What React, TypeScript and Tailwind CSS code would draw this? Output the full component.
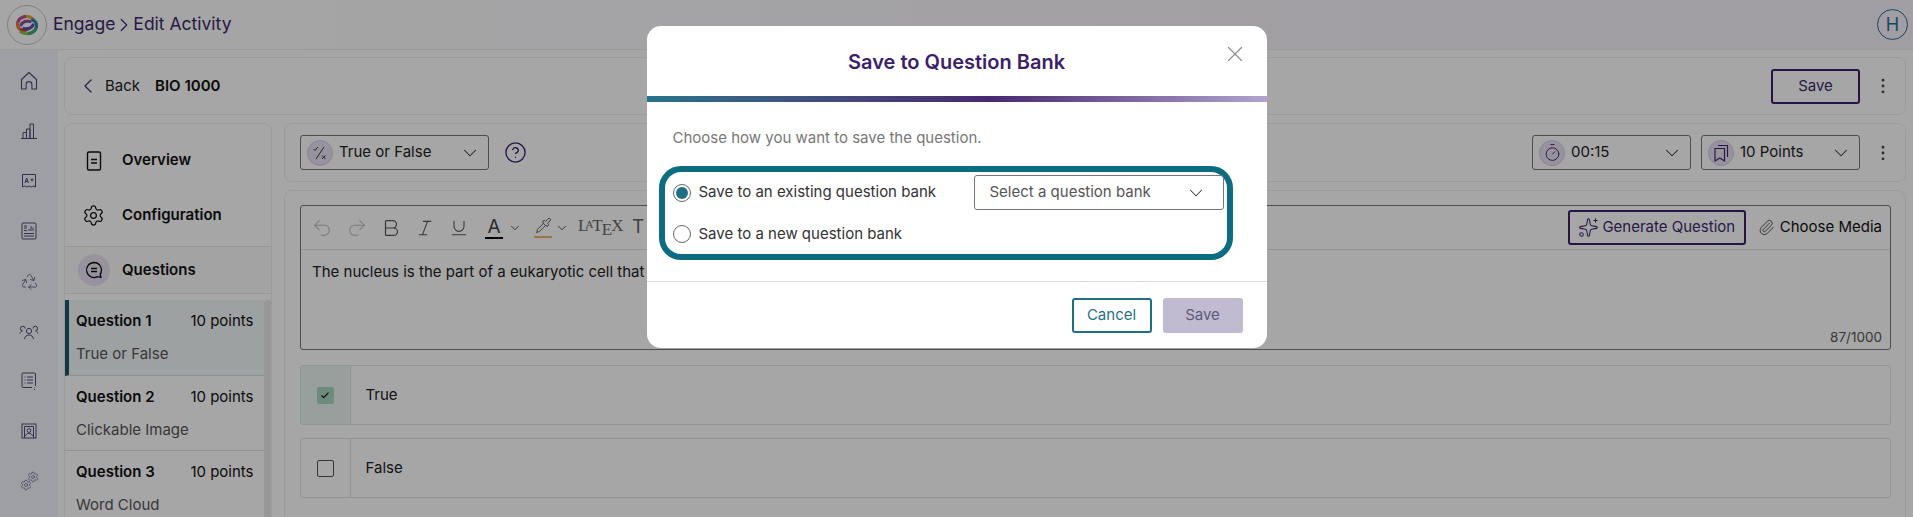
import {
  Bold,
  ChevronDown,
  ChevronLeft,
  ChevronRight,
  CircleHelp,
  EllipsisVertical,
  Italic,
  Paperclip,
  Pipette,
  Recycle,
  Redo2,
  Settings,
  Sparkles,
  Timer,
  Underline,
  Undo2,
  X,
} from "lucide-react";

const questions = [
  { name: "Question 1", type: "True or False", active: true },
  { name: "Question 2", type: "Clickable Image", active: false },
  { name: "Question 3", type: "Word Cloud", active: false },
];

function Logo() {
  return (
    <div className="w-10 h-10 rounded-full bg-white border border-[#c4c4c4] flex items-center justify-center shrink-0">
      <svg width="24" height="22" viewBox="0 0 24 22" fill="none" strokeWidth="3.2" strokeLinecap="round">
        <path d="M18 5 C15 2.5 12 2 9.5 2.6" stroke="#d9a93a" />
        <path d="M9.5 2.6 C6 3.4 3 6 2.6 9.5" stroke="#c04a8a" />
        <path d="M2.6 9.5 C2.3 12.5 3.5 15 6.5 16" stroke="#e8772e" />
        <path d="M6.5 16 C9 16.8 11.5 16 13 14.5" stroke="#d9352f" />
        <path d="M6 11 C7 8 11 6.5 15 7.5" stroke="#8a4fa3" />
        <path d="M6 18 C9 20 12 20 14.5 19.4" stroke="#8cc152" />
        <path d="M14.5 19.4 C18 18.5 21 16 21.4 12.5" stroke="#3fa37a" />
        <path d="M21.4 12.5 C21.7 9.5 20.5 7 17.5 6" stroke="#2f80b5" />
        <path d="M18 11 C17 14 13 15.5 9 14.5" stroke="#5f4fa8" />
      </svg>
    </div>
  );
}

function HomeIcon() {
  return (
    <svg width="20" height="20" viewBox="0 0 20 20" fill="none" stroke="currentColor" strokeWidth="1.1">
      <path d="M2.5 18V8.5L10 1.5l7.5 7V18h-4.6v-4.5a2.9 2.9 0 0 0-5.8 0V18z" strokeLinejoin="round" />
    </svg>
  );
}

function BarsIcon() {
  return (
    <svg width="18" height="18" viewBox="0 0 18 18" fill="none" stroke="currentColor" strokeWidth="1">
      <path d="M1 16.5h16M3 16.5v-6h3.5v6M6.5 16.5V7H10v9.5M10 16.5V2h3.5v14.5" />
    </svg>
  );
}

function GradeIcon() {
  return (
    <svg width="18" height="18" viewBox="0 0 18 18" fill="none" stroke="currentColor" strokeWidth="1">
      <path d="M2.5 2.5h13v12.5l-2.2-1-2.1 1-2.2-1-2.2 1-2.1-1-2.2 1z" />
      <path d="M5 11l1.7-5 1.7 5M5.7 9.4h2.2M10.5 7.8h3M12 6.3v3" />
    </svg>
  );
}

function ReportIcon() {
  return (
    <svg width="16" height="18" viewBox="0 0 16 18" fill="none" stroke="currentColor" strokeWidth="1">
      <rect x="1" y="1" width="14" height="16" rx="1" />
      <path d="M3 4h3M3 6h3M3 8.5h3M8 9V7M10 9V4M12 9V5.5M3 11.5h10M3 14h10" />
    </svg>
  );
}

function UsersIcon() {
  return (
    <svg width="20" height="17" viewBox="0 0 20 17" fill="none" stroke="currentColor" strokeWidth="1">
      <circle cx="10" cy="8" r="2.6" />
      <path d="M5.5 16c.4-2.6 2.3-4 4.5-4s4.100 1.400 4.500 4" />
      <path d="M6 5.500a2.300 2.300 0 1 0-2.500 2.300C2 8.300 1.200 9.300 1 10.500" />
      <path d="M14 5.500a2.300 2.300 0 1 1 2.500 2.300c1.500.5 2.300 1.500 2.500 2.700" />
    </svg>
  );
}

function ListDocIcon() {
  return (
    <svg width="16" height="19" viewBox="0 0 16 19" fill="none" stroke="currentColor" strokeWidth="1">
      <path d="M14.500 14V2a1 1 0 0 0-1-1H2a1 1 0 0 0-1 1v12.500a1 1 0 0 0 1 1h9" />
      <path d="M3.500 5h1M6 5h6M3.500 8h1M6 8h6M3.500 11h1M6 11h6M13.500 15.500v.5M13.500 17v1" />
    </svg>
  );
}

function BoardIcon() {
  return (
    <svg width="16" height="16" viewBox="0 0 16 16" fill="none" stroke="currentColor" strokeWidth="1">
      <rect x="1" y="1" width="14" height="14" />
      <path d="M3.500 15V3.500h9V15" />
      <circle cx="8" cy="7.500" r="1.900" />
      <path d="M4.500 13c.5-2 2-2.800 3.500-2.800s3 .8 3.500 2.800" />
    </svg>
  );
}

function CogsIcon() {
  return (
    <div className="relative w-[19px] h-[20px]">
      <Settings size={12} strokeWidth={1.2} className="absolute left-0 bottom-0" />
      <Settings size={12} strokeWidth={1.2} className="absolute right-0 top-0" />
    </div>
  );
}

function Sidebar() {
  const iconBox = "h-[50px] flex items-center justify-center text-[#4d4a70]";
  return (
    <div className="w-[58px] shrink-0 bg-[#f3f4fd] pt-[6px] flex flex-col">
      <div className={iconBox}><HomeIcon /></div>
      <div className={iconBox}><BarsIcon /></div>
      <div className={iconBox}><GradeIcon /></div>
      <div className={iconBox}><ReportIcon /></div>
      <div className={iconBox}><Recycle size={19} strokeWidth={1} /></div>
      <div className={iconBox}><UsersIcon /></div>
      <div className={iconBox}><ListDocIcon /></div>
      <div className={iconBox}><BoardIcon /></div>
      <div className={iconBox}><CogsIcon /></div>
    </div>
  );
}

function OverviewIcon() {
  return (
    <svg width="18" height="22" viewBox="0 0 18 22" fill="none" stroke="#111" strokeWidth="1.4">
      <rect x="2.500" y="2" width="13" height="18" rx="1.500" />
      <path d="M6 9.500h6M6 13h6" />
    </svg>
  );
}

function QuestionsIcon() {
  return (
    <svg width="20" height="20" viewBox="0 0 20 20" fill="none" stroke="#111" strokeWidth="1.3">
      <path d="M10 2.500a7.500 7.500 0 1 0 3.400 14.200l3.600 .8-.8-3.400A7.500 7.500 0 0 0 10 2.500z" />
      <path d="M7 8.500h6M7 11.500h6" />
    </svg>
  );
}

function LeftPanel() {
  return (
    <div className="w-[208px] shrink-0 h-[400px] bg-white rounded-t-lg border border-[#efefef] pt-[9px] overflow-hidden">
      <div className="h-[55px] flex items-center text-[15px] font-semibold text-[#111]">
        <div className="w-[57px] flex justify-center"><OverviewIcon /></div>
        Overview
      </div>
      <div className="h-[58px] pb-[3px] flex items-center text-[15px] font-semibold text-[#111]">
        <div className="w-[57px] flex justify-center"><Settings size={23} strokeWidth={1.3} /></div>
        Configuration
      </div>
      <div className="h-[48px] flex items-center text-[15px] font-semibold text-[#111] border-y border-[#e6e6e6] bg-[#fbfbfb]">
        <div className="w-[57px] flex justify-center">
          <div className="w-8 h-8 rounded-full bg-[#e9e0f2] flex items-center justify-center"><QuestionsIcon /></div>
        </div>
        Questions
      </div>
      <div className="flex mt-[6px]">
        <div className="w-[200px]">
          {questions.map((q) => (
            <div
              key={q.name}
              className={`h-[75.5px] pt-[11px] pr-[10px] border-b border-[#dedede] ${q.active ? "bg-[#f3f8f9] border-l-4 border-l-[#16596c] pl-[7px]" : "pl-[11px]"}`}
            >
              <div className="flex justify-between text-[15px] leading-5 text-[#111]">
                <span className="font-semibold">{q.name}</span>
                <span>10 points</span>
              </div>
              <div className="mt-[13px] text-[15px] leading-5 text-[#555]">{q.type}</div>
            </div>
          ))}
        </div>
        <div className="w-[7px] ml-[0.5px] h-[230px] rounded-full bg-[#e8e8e8]" />
      </div>
    </div>
  );
}

function PickSelect({ w, icon, label }: { w: string; icon: React.ReactNode; label: string }) {
  return (
    <div className={`${w} h-[35px] border border-[#777] rounded-[3px] bg-white flex items-center pl-[6px] pr-[7px]`}>
      <div className="w-[26px] h-[26px] rounded-full bg-[#e9e0f2] border border-[#d5c9e4] flex items-center justify-center text-[#3b2a6b] shrink-0">
        {icon}
      </div>
      <span className="ml-[6px] text-[15px] text-[#222] flex-1">{label}</span>
      <ChevronDown size={22} strokeWidth={1.1} className="text-[#333]" />
    </div>
  );
}

function TfIcon() {
  return (
    <svg width="18" height="18" viewBox="0 0 18 18" fill="none" stroke="#333" strokeWidth="1">
      <path d="M2.500 5l1.500 1.500L7 3M13 3L5 15M11 11.500l3.500 3.500M14.500 11.500L11 15" />
    </svg>
  );
}

function BookmarkStack() {
  return (
    <svg width="18" height="20" viewBox="0 0 18 20" fill="none" stroke="#3b2a6b" strokeWidth="1.2">
      <path d="M3 5.500h9.500V18l-4.700-3L3 18z" />
      <path d="M6 2.500h9.500V14" />
    </svg>
  );
}

function Toolbar() {
  return (
    <div className="h-[44px] border-b border-[#e4e4e4] flex items-center pr-[8px]">
      <div className="w-[42px] flex justify-center"><Undo2 size={22} strokeWidth={1.1} className="text-[#bbb]" /></div>
      <div className="w-[28px] flex justify-center"><Redo2 size={22} strokeWidth={1.1} className="text-[#bbb]" /></div>
      <div className="w-[40px] flex justify-center"><Bold size={22} strokeWidth={1.3} className="text-[#555]" /></div>
      <div className="w-[28px] flex justify-center"><Italic size={20} strokeWidth={1.3} className="text-[#555]" /></div>
      <div className="w-[40px] flex justify-center"><Underline size={20} strokeWidth={1.3} className="text-[#555]" /></div>
      <div className="w-[26px] flex flex-col items-center ml-[2px]">
        <span className="text-[19px] leading-[19px] text-[#444]">A</span>
        <div className="w-[18px] h-[2px] bg-black mt-[1px]" />
      </div>
      <ChevronDown size={14} strokeWidth={1.6} className="text-[#444] ml-[1px]" />
      <div className="w-[22px] flex flex-col items-center ml-[10px]">
        <Pipette size={17} strokeWidth={1.2} className="text-[#444]" />
        <div className="w-[18px] h-[2px] bg-[#e9b46a] mt-[2px]" />
      </div>
      <ChevronDown size={14} strokeWidth={1.6} className="text-[#444] ml-[1px]" />
      <div className="ml-[9px] w-[44px] flex items-start text-[#666] font-['Liberation_Serif',serif] text-[17px] leading-[16px]">
        <span>L</span>
        <span className="text-[11px] leading-[12px] -ml-[3px]">A</span>
        <span className="-ml-[1px]">T</span>
        <span className="-ml-[1px] mt-[4px]">E</span>
        <span className="-ml-[1px]">X</span>
      </div>
      <span className="ml-[10px] text-[19px] text-[#666]">T</span>
      <div className="flex-1" />
      <div className="w-[178px] h-[35px] mr-[12px] border-2 border-[#3b1f6b] rounded-[3px] flex items-center justify-center gap-[3px] text-[15px] text-[#3b2a6b]">
        <Sparkles size={21} strokeWidth={1.2} />
        Generate Question
      </div>
      <Paperclip size={17} strokeWidth={1.2} className="text-[#333] mr-[5px]" />
      <span className="text-[15px] text-[#111]">Choose Media</span>
    </div>
  );
}

function AnswerRow({ label, checked }: { label: string; checked: boolean }) {
  return (
    <div className="h-[60px] border border-[#e3e3e3] rounded-[3px] flex items-center">
      <div className={`w-[49.5px] h-full border-r border-[#e3e3e3] flex items-center justify-center ${checked ? "bg-[#ecf4f1]" : ""}`}>
        {checked ? (
          <div className="w-[17px] h-[17px] rounded-[2px] bg-[#a9d7c0] flex items-center justify-center">
            <svg width="12" height="12" viewBox="0 0 12 12" fill="none" stroke="#111" strokeWidth="1.2"><path d="M2.500 6.500l2.200 2.200 4.800-5" /></svg>
          </div>
        ) : (
          <div className="w-[17px] h-[17px] rounded-[2px] border border-[#555] bg-white" />
        )}
      </div>
      <span className="ml-[15px] text-[15px] text-[#222]">{label}</span>
    </div>
  );
}

function SaveModal() {
  return (
    <div className="w-[620px] h-[322px] bg-white rounded-[14px] overflow-hidden flex flex-col">
      <div className="h-[70px] grid grid-cols-[1fr_auto_1fr] items-center">
        <div />
        <h2 className="text-xl font-semibold text-[#3b1f6b] mt-[2px]">Save to Question Bank</h2>
        <X size={26} strokeWidth={1} className="justify-self-end self-start mt-[15px] mr-[19px] text-[#8b8b8b]" />
      </div>
      <div className="h-[6px] bg-gradient-to-r from-[#26728a] via-[#47286f] via-55% to-[#b3a3cf]" />
      <div className="h-[180px] border-b border-[#d9d9d9] pt-[26px]">
        <p className="pl-[26px] text-[15px] leading-5 text-[#777]">Choose how you want to save the question.</p>
        <div className="mt-[18px] ml-[12px] w-[574px] h-[94px] border-[6px] border-[#0d6c82] rounded-[22px] pl-[8px] pr-[3px] pt-[3px]">
          <div className="flex items-center">
            <label className="flex-1 flex items-center gap-[8px] text-[15px] text-[#333]">
              <span className="w-[18px] h-[18px] rounded-full border border-[#666] flex items-center justify-center">
                <span className="w-[12px] h-[12px] rounded-full bg-[#1f6f85]" />
              </span>
              Save to an existing question bank
            </label>
            <div className="w-[250px] h-[35px] border border-[#777] rounded-[3px] flex items-center pl-[15px] pr-[8px] text-[15px] text-[#555]">
              <span className="flex-1">Select a question bank</span>
              <ChevronDown size={22} strokeWidth={1.1} className="text-[#333] mr-[8px]" />
            </div>
          </div>
          <label className="mt-[14px] flex items-center gap-[8px] text-[15px] leading-5 text-[#333]">
            <span className="w-[18px] h-[18px] rounded-full border border-[#666]" />
            Save to a new question bank
          </label>
        </div>
      </div>
      <div className="flex-1 flex justify-end items-start gap-[11px] pt-[16px] pr-[24px]">
        <button className="w-[80px] h-[35px] border-2 border-[#1f6f85] rounded-[3px] text-[15px] text-[#1f6f85]">Cancel</button>
        <button className="w-[80px] h-[35px] bg-[#c1bbd1] rounded-[3px] text-[15px] text-[#5c5a78]">Save</button>
      </div>
    </div>
  );
}

export default function App() {
  return (
    <div className="relative h-screen overflow-hidden flex flex-col bg-white font-['Inter',sans-serif]">
      {/* Top bar */}
      <div className="h-[50px] shrink-0 border-b border-[#eee] bg-gradient-to-r from-white to-[#f6f1fa] flex items-center pl-[7px] pr-[5px]">
        <Logo />
        <span className="ml-[6px] text-[17.5px] text-[#3b2a6b]">Engage</span>
        <ChevronRight size={22} strokeWidth={1.3} className="text-[#3b2a6b] -mx-[2px]" />
        <span className="text-[17.5px] text-[#3b2a6b]">Edit Activity</span>
        <div className="flex-1" />
        <div className="w-[31px] h-[31px] rounded-full border border-[#1f6f9f] flex items-center justify-center text-lg text-[#1f6f9f]">H</div>
      </div>

      <div className="flex flex-1 min-h-0">
        <Sidebar />
        <div className="flex-1 pl-[6px] pr-[7px] pt-[7px] flex flex-col gap-[8px] min-w-0">
          {/* Activity header */}
          <div className="h-[58px] shrink-0 border border-[#efefef] rounded-lg flex items-center pl-[11px] pr-[12px]">
            <ChevronLeft size={24} strokeWidth={1.2} className="text-[#3b2a6b]" />
            <span className="ml-[5px] text-[15px] text-[#222]">Back</span>
            <span className="ml-[15px] text-[15px] font-semibold text-[#111]">BIO 1000</span>
            <div className="flex-1" />
            <button className="w-[89px] h-[35px] border-2 border-[#3b1f6b] rounded-[3px] text-[15px] text-[#3b2a6b]">Save</button>
            <EllipsisVertical size={20} strokeWidth={1.5} className="ml-[13px] text-[#444]" />
          </div>

          <div className="flex gap-[12px] min-w-0">
            <LeftPanel />
            <div className="flex-1 flex flex-col gap-[8px] min-w-0">
              {/* Question type row */}
              <div className="h-[59px] shrink-0 border border-[#efefef] rounded-lg flex items-center pl-[15px] pr-[12px]">
                <PickSelect w="w-[189px]" icon={<TfIcon />} label="True or False" />
                <CircleHelp size={23} strokeWidth={1.4} className="ml-[15px] text-[#3b1f6b]" />
                <div className="flex-1" />
                <PickSelect w="w-[159px]" icon={<Timer size={19} strokeWidth={1.2} />} label="00:15" />
                <div className="w-[10px]" />
                <PickSelect w="w-[159px]" icon={<BookmarkStack />} label="10 Points" />
                <EllipsisVertical size={20} strokeWidth={1.5} className="ml-[13px] text-[#444]" />
              </div>

              {/* Editor and answers */}
              <div className="h-[400px] border border-[#efefef] rounded-t-lg pt-[14px] pl-[15px] pr-[14px] flex flex-col">
                <div className="h-[145px] border border-[#777] rounded-[3px] flex flex-col">
                  <Toolbar />
                  <p className="pl-[11px] pt-[12px] text-[15px] leading-5 text-[#222]">
                    The nucleus is the part of a eukaryotic cell that contains most of the genetic material.
                  </p>
                  <div className="flex-1" />
                  <div className="pr-[8px] pb-[2px] text-right text-[13.5px] text-[#555]">87/1000</div>
                </div>
                <div className="mt-[15px] flex flex-col gap-[13px]">
                  <AnswerRow label="True" checked />
                  <AnswerRow label="False" checked={false} />
                </div>
              </div>
            </div>
          </div>
        </div>
      </div>

      {/* Dim layer and dialog */}
      <div className="absolute inset-0 bg-black/35 flex justify-center items-start pt-[26px]">
        <SaveModal />
      </div>
    </div>
  );
}
